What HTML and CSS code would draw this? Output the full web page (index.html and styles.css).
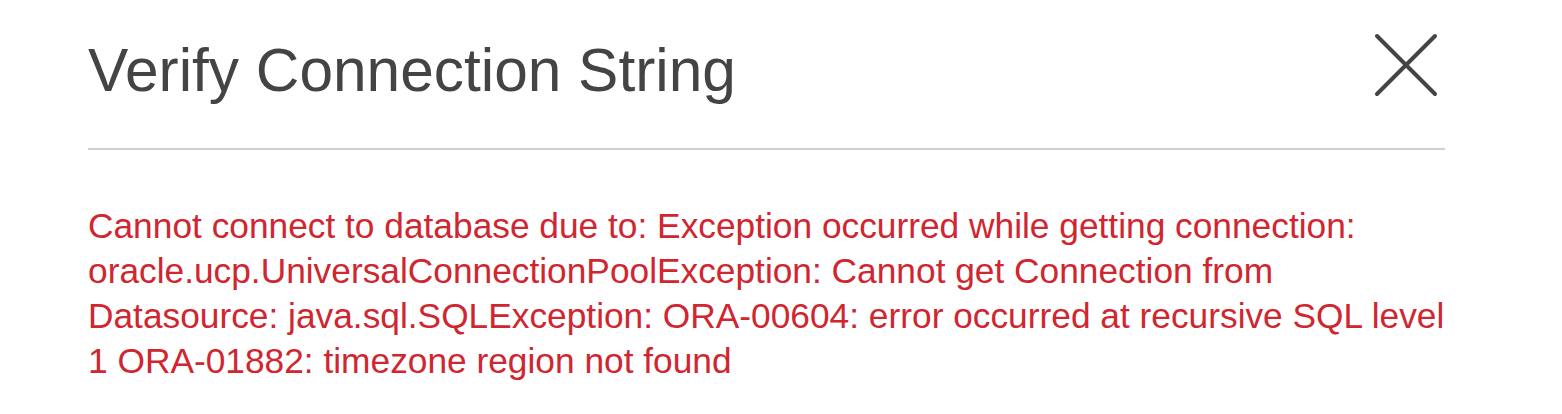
FILE: index.html
```html
<!DOCTYPE html>
<html lang="en">
<head>
  <meta charset="UTF-8">
  <title>Verify Connection String</title>
  <link rel="stylesheet" href="styles.css">
</head>
<body>
  <section class="dialog">
    <header class="dialog-header">
      <h1 class="dialog-title">Verify Connection String</h1>
      <button type="button" class="close-btn" aria-label="Close">
        <svg width="64" height="64" viewBox="0 0 64 64">
          <path d="M3 3 L61 61 M61 3 L3 61" stroke="#444" stroke-width="4" stroke-linecap="round" fill="none"/>
        </svg>
      </button>
    </header>
    <p class="error-msg">Cannot connect to database due to: Exception occurred while getting connection: oracle.ucp.UniversalConnectionPoolException: Cannot get Connection from Datasource: java.sql.SQLException: ORA-00604: error occurred at recursive SQL level 1 ORA-01882: timezone region not found</p>
  </section>
</body>
</html>
```

FILE: styles.css
```css
body {
  margin: 0;
  background: #fff;
  font-family: "Liberation Sans", Arial, sans-serif;
}
.dialog {
  width: 1357px;
  margin-left: 88px;
}
.dialog-header {
  display: flex;
  justify-content: space-between;
  align-items: flex-start;
  height: 148px;
  border-bottom: 2px solid #d0d0d0;
}
.dialog-title {
  margin: 0;
  padding-top: 31px;
  font-size: 60.4px;
  font-weight: normal;
  line-height: 78px;
  color: #444;
}
.close-btn {
  margin: 33px 7px 0 0;
  padding: 0;
  border: none;
  background: none;
  cursor: pointer;
}
.close-btn svg {
  display: block;
}
.error-msg {
  margin: 0;
  padding-top: 53px;
  font-size: 35.3px;
  line-height: 45px;
  color: #d0262f;
}
```
